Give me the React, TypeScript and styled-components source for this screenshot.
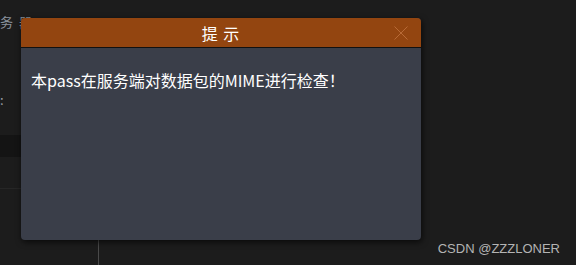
import React from "react";
import styled, { createGlobalStyle } from "styled-components";

const Global = createGlobalStyle`
  html, body { margin: 0; padding: 0; background: #1c1c1c; }
  body { font-family: "Noto Sans CJK SC", "Noto Sans", sans-serif; }
  #root { width: 576px; height: 265px; }
`;

const Page = styled.div`
  position: relative;
  width: 576px;
  height: 265px;
  overflow: hidden;
  background: #1c1c1c;
  display: flex;
`;

const Sidebar = styled.div`
  width: 98px;
  display: flex;
  flex-direction: column;
`;

const SideTitle = styled.div`
  height: 44px;
  padding-top: 12px;
  box-sizing: border-box;
  font-size: 13px;
  line-height: 20px;
  color: #8a929c;
  letter-spacing: 1.5px;
  white-space: nowrap;
`;

const SideLabel = styled.div`
  height: 91px;
  padding-top: 46px;
  box-sizing: border-box;
  font-size: 13px;
  line-height: 20px;
  color: #9aa0a8;
`;

const DarkBand = styled.div`
  height: 22px;
  background: #141414;
`;

const SideRow = styled.div`
  height: 31px;
  border-bottom: 1px solid #262626;
`;

const Main = styled.div`
  flex: 1;
  display: flex;
  flex-direction: column;
  justify-content: flex-end;
`;

const BottomPanel = styled.div`
  height: 60px;
  border-left: 1px solid #4a4a4a;
`;

const Dialog = styled.div`
  position: absolute;
  left: 21px;
  top: 18px;
  width: 400px;
  height: 222px;
  border-radius: 4px;
  overflow: hidden;
  background: #3a3e49;
  box-shadow: 1px 2px 6px rgba(0, 0, 0, 0.7);
  display: flex;
  flex-direction: column;
`;

const Header = styled.div`
  position: relative;
  height: 29px;
  background: #934510;
  border-bottom: 1px solid #111111;
  display: flex;
  align-items: center;
  justify-content: center;
  color: #ffffff;
  font-size: 16px;
  letter-spacing: 1px;
`;

const Close = styled.button`
  position: absolute;
  right: 13px;
  top: 8px;
  width: 14px;
  height: 14px;
  padding: 0;
  border: none;
  background: transparent;
  display: flex;
`;

const Body = styled.div`
  padding: 20px 10px;
  color: #ffffff;
  font-size: 16px;
  line-height: 24px;
`;

const Watermark = styled.div`
  position: absolute;
  right: 16px;
  bottom: 8px;
  font-family: "Liberation Sans", Arial, sans-serif;
  font-size: 13px;
  line-height: 16px;
  color: #b4b4b4;
`;

export default function App() {
  return (
    <>
      <Global />
      <Page>
        <Sidebar>
          <SideTitle>务 器</SideTitle>
          <SideLabel>:</SideLabel>
          <DarkBand />
          <SideRow />
        </Sidebar>
        <Main>
          <BottomPanel />
        </Main>
        <Dialog>
          <Header>
            提 示
            <Close aria-label="关闭">
              <svg width="14" height="14" viewBox="0 0 14 14">
                <path d="M0.5 0.5 L13.5 13.5 M13.5 0.5 L0.5 13.5" stroke="#b86a36" strokeWidth="1" fill="none" />
              </svg>
            </Close>
          </Header>
          <Body>本pass在服务端对数据包的MIME进行检查！</Body>
        </Dialog>
        <Watermark>CSDN @ZZZLONER</Watermark>
      </Page>
    </>
  );
}
